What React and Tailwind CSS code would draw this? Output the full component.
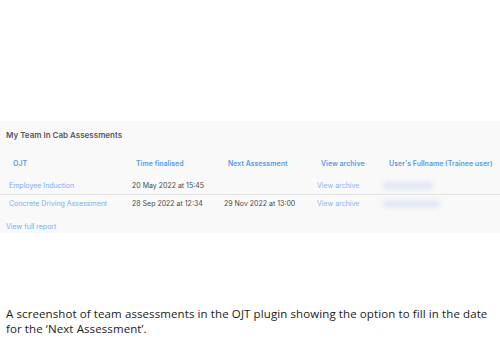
export default function App() {
  const cols = "grid grid-cols-[123px_92px_93px_66px_1fr] pl-[9px] items-center";
  return (
    <div className="w-[500px] h-[348px] bg-white flex flex-col" style={{ fontFamily: "Inter, 'Liberation Sans', sans-serif" }}>
      <div className="h-[121px]" />
      <div className="bg-[#f9f9f9] h-[112px] flex flex-col">
        <div className="pl-[6px] pt-[8px] text-[8px] font-semibold text-[#555a60] leading-[12px]">My Team In Cab Assessments</div>
        <div className={cols + " mt-[18px] text-[7px] font-semibold text-[#5b9be6] leading-[10px]"}>
          <div className="pl-[4px]">OJT</div>
          <div className="pl-[4px]">Time finalised</div>
          <div className="pl-[4px]">Next Assessment</div>
          <div className="pl-[4px]">View archive</div>
          <div className="pl-[6px] whitespace-nowrap">User's Fullname (Trainee user)</div>
        </div>
        <div className={cols + " mt-[9px] h-[17px] text-[7px] leading-[10px] border-b border-[#e2e2e2]"}>
          <div className="text-[#7aaef0]">Employee Induction</div>
          <div className="text-[#4a4a4a]">20 May 2022 at 15:45</div>
          <div />
          <div className="text-[#8ab6ee]">View archive</div>
          <div><div className="w-[50px] h-[8px] rounded-full bg-[#e2e7f5] blur-[2px]" /></div>
        </div>
        <div className={cols + " h-[17px] text-[7px] leading-[10px]"}>
          <div className="text-[#7aaef0] whitespace-nowrap">Concrete Driving Assessment</div>
          <div className="text-[#4a4a4a]">28 Sep 2022 at 12:34</div>
          <div className="text-[#4a4a4a] whitespace-nowrap">29 Nov 2022 at 13:00</div>
          <div className="text-[#8ab6ee]">View archive</div>
          <div><div className="w-[57px] h-[8px] rounded-full bg-[#e2e7f5] blur-[2px]" /></div>
        </div>
        <div className="pl-[6px] mt-[10px] text-[7px] leading-[10px] text-[#7aaef0]">View full report</div>
      </div>
      <div className="pt-[73px] pl-[6px] text-[11.5px] leading-[15px] tracking-[0.1px] text-[#1a1a1a]" style={{ fontFamily: "'Open Sans', 'Noto Sans', sans-serif" }}>
        A screenshot of team assessments in the OJT plugin showing the option to fill in the date for the ‘Next Assessment’.
      </div>
    </div>
  );
}
